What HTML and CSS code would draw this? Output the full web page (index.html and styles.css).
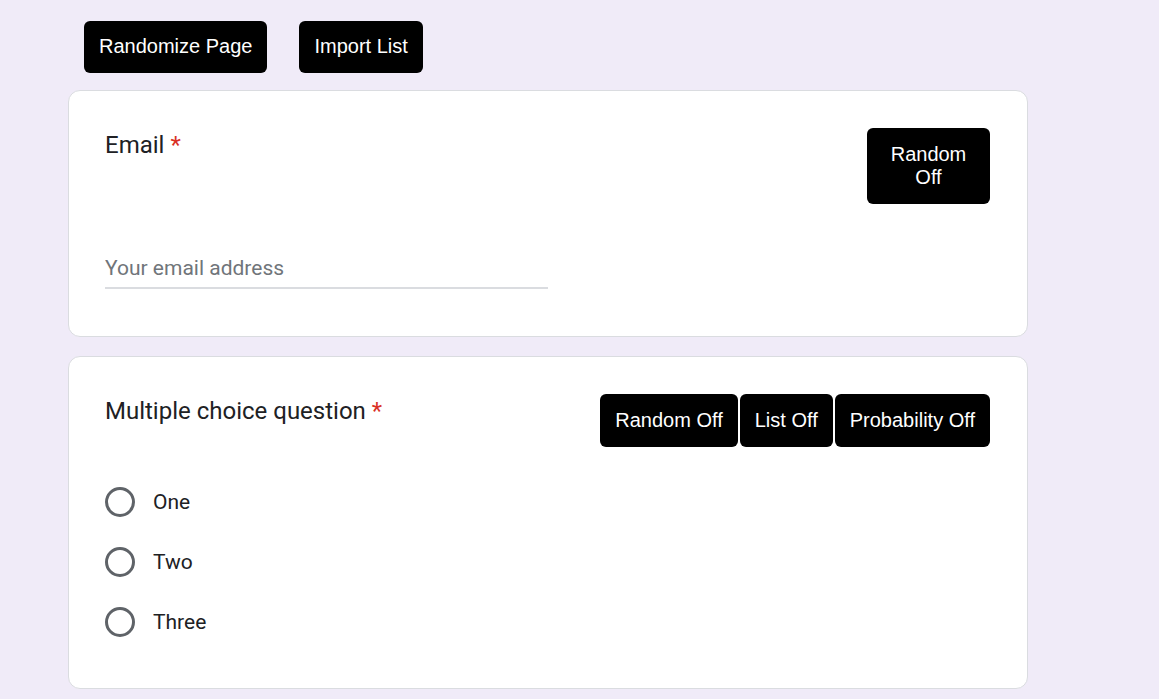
FILE: index.html
```html
<!DOCTYPE html>
<html lang="en">
<head>
  <meta charset="UTF-8">
  <title>Form Randomizer</title>
  <link rel="stylesheet" href="styles.css">
</head>
<body>
  <div class="container">
    <div class="toolbar">
      <button class="btn">Randomize Page</button>
      <button class="btn">Import List</button>
    </div>

    <div class="card">
      <div class="card-head">
        <div class="title">Email <span class="req">*</span></div>
        <div class="tools">
          <button class="btn btn-narrow">Random Off</button>
        </div>
      </div>
      <input class="text-input" type="email" placeholder="Your email address">
    </div>

    <div class="card">
      <div class="card-head">
        <div class="title">Multiple choice question <span class="req">*</span></div>
        <div class="tools">
          <button class="btn">Random Off</button>
          <button class="btn">List Off</button>
          <button class="btn">Probability Off</button>
        </div>
      </div>
      <div class="options">
        <label class="option"><span class="radio"></span>One</label>
        <label class="option"><span class="radio"></span>Two</label>
        <label class="option"><span class="radio"></span>Three</label>
      </div>
    </div>
  </div>
</body>
</html>
```

FILE: styles.css
```css
body {
  margin: 0;
  background: #f0ebf8;
  font-family: Roboto, 'Liberation Sans', sans-serif;
  color: #202124;
}
.container {
  width: 960px;
  margin-left: 68px;
}
.toolbar {
  display: flex;
  padding-top: 21px;
  margin-bottom: 17px;
}
.toolbar .btn {
  margin: 0 16px;
  padding: 14px 15px 15px;
}
.btn {
  background: #000;
  color: #fff;
  border: none;
  border-radius: 6px;
  padding: 15px;
  font-family: 'Liberation Sans', Arial, sans-serif;
  font-size: 20px;
  line-height: 23px;
  cursor: pointer;
}
.btn-narrow {
  width: 123px;
}
.card {
  background: #fff;
  border: 1px solid #dadce0;
  border-radius: 12px;
  padding: 37px 37px 36px 36px;
  margin-bottom: 19px;
}
.card-head {
  display: flex;
  justify-content: space-between;
  align-items: flex-start;
}
.title {
  font-size: 24px;
  line-height: 36px;
  margin-top: -1px;
}
.req {
  color: #d93025;
}
.tools {
  display: flex;
  gap: 2px;
}
.text-input {
  display: block;
  box-sizing: border-box;
  width: 50%;
  margin: 49px 0 11px;
  padding: 0 0 4px;
  border: none;
  border-bottom: 2px solid #dadce0;
  font-family: Roboto, sans-serif;
  font-size: 21px;
  line-height: 30px;
  height: 36px;
  outline: none;
  color: #202124;
}
.text-input::placeholder {
  color: #70757a;
}
.options {
  margin-top: 25px;
}
.option {
  display: flex;
  align-items: center;
  height: 60px;
  font-size: 21px;
}
.radio {
  box-sizing: border-box;
  width: 30px;
  height: 30px;
  border: 3px solid #5f6368;
  border-radius: 50%;
  margin-right: 18px;
}
```
